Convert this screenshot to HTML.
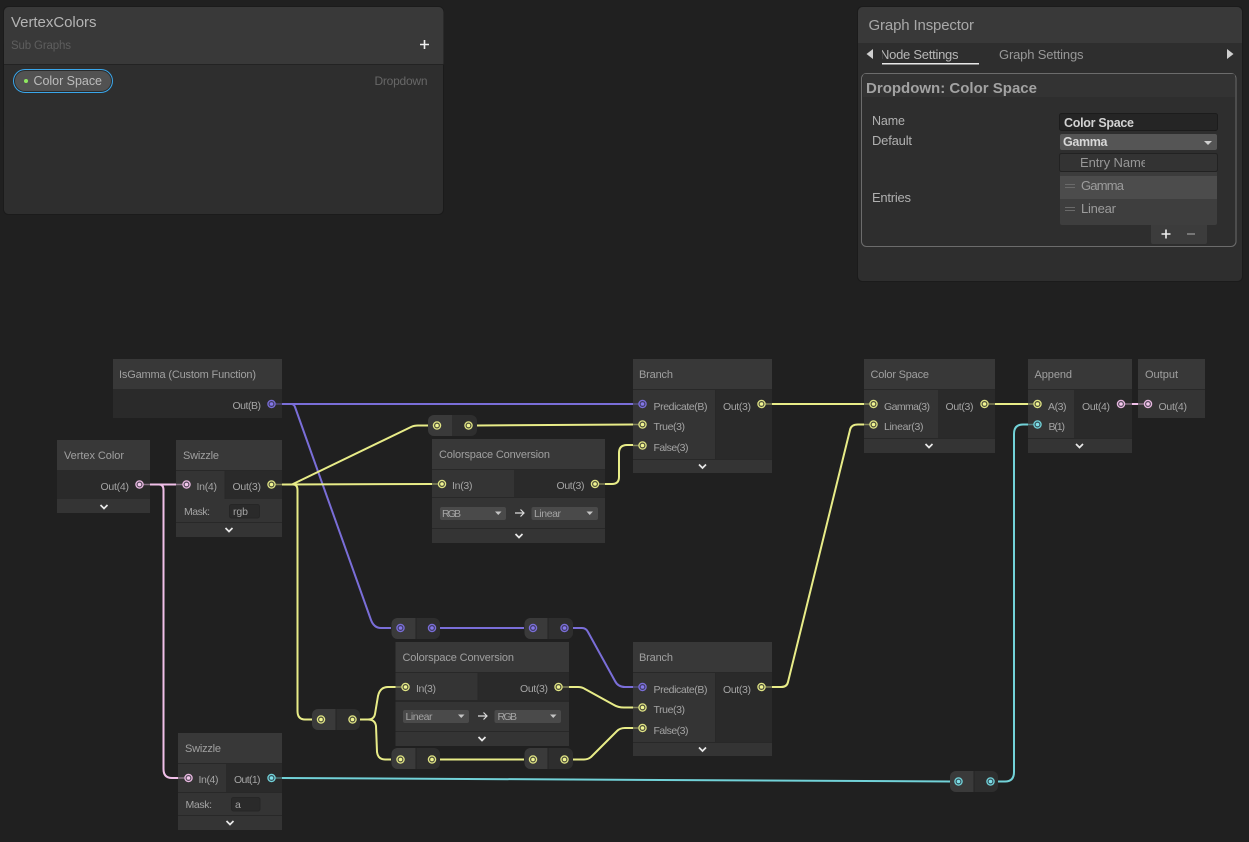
<!DOCTYPE html>
<html lang="en">
<head>
<meta charset="utf-8">
<title>VertexColors Shader Graph</title>
<style>
html,body{margin:0;padding:0;background:#202020;width:1249px;height:842px;overflow:hidden}
svg{display:block;font-family:"Liberation Sans",sans-serif}
.t{font-size:10.5px;fill:#a4a4a4}
.h{font-size:11px;fill:#a0a0a0}
.w{fill:none;stroke-width:2;stroke-linejoin:round}
.y{stroke:#e8ec88}.p{stroke:#7a6ed8}.k{stroke:#f0bfe8}.c{stroke:#72d2d8}
.l{fill:none;stroke-width:1.500;opacity:.45}
.chev{fill:none;stroke:#e8e8e8;stroke-width:1.700}
.py circle:first-child{fill:#4a4b3a;stroke:#dfe384;stroke-width:1.300}
.py circle:last-child{fill:#f0f490}
.pp circle:first-child{fill:#3e3a60;stroke:#7a6ed8;stroke-width:1.300}
.pp circle:last-child{fill:#8478e8}
.pk circle:first-child{fill:#54485a;stroke:#e8b8e0;stroke-width:1.300}
.pk circle:last-child{fill:#f4c8ec}
.pc circle:first-child{fill:#34505a;stroke:#72d2d8;stroke-width:1.300}
.pc circle:last-child{fill:#80e0e8}
.dd{fill:#4a4a4a}
.tri{fill:#c4c4c4}
</style>
</head>
<body>
<svg width="1249" height="842" viewBox="0 0 1249 842" xmlns="http://www.w3.org/2000/svg">
<rect width="1249" height="842" fill="#202020"/>

<!-- Blackboard -->
<rect x="3.500" y="6.500" width="440" height="208" rx="5" fill="#2e2e2e" stroke="#1b1b1b"/>
<path d="M4 64V12a5 5 0 0 1 5-5H438.500a5 5 0 0 1 5 5V64Z" fill="#393939"/>
<rect x="4" y="64" width="439.500" height="1" fill="#232323"/>
<text x="11" y="27" font-size="15" fill="#b4b4b4" textLength="85.500">VertexColors</text>
<text x="11" y="49" font-size="11.500" fill="#5e5e5e" textLength="60">Sub Graphs</text>
<path d="M424.500 40v9M420 44.500h9" stroke="#eee" stroke-width="1.600" fill="none"/>
<rect x="13.500" y="69.500" width="99" height="23" rx="11.500" fill="#2a2a2a" stroke="#3aa6ea" stroke-width="1"/>
<rect x="15" y="71" width="96" height="20" rx="10" fill="#525252"/>
<circle cx="26" cy="81" r="2" fill="#8ee860"/>
<text x="33.500" y="85" font-size="12.500" fill="#bcbcbc" textLength="68.500">Color Space</text>
<text x="374.500" y="85" font-size="12" fill="#676767" textLength="53">Dropdown</text>

<!-- Graph Inspector -->
<rect x="857.500" y="6.500" width="385" height="275" rx="5" fill="#2e2e2e" stroke="#1b1b1b"/>
<path d="M858 43V12a5 5 0 0 1 5-5H1237a5 5 0 0 1 5 5V43Z" fill="#393939"/>
<text x="868.500" y="30" font-size="15" fill="#a8a8a8" textLength="105.500">Graph Inspector</text>
<path d="M873 49v10l-6.500-5Z" fill="#cfcfcf"/>
<path d="M1227 49v10l6.500-5Z" fill="#cfcfcf"/>
<svg x="882" y="44" width="100" height="20" overflow="hidden"><text x="-2" y="15" font-size="13" fill="#b8b8b8" textLength="78.500">Node Settings</text></svg>
<rect x="882" y="63" width="97" height="1.500" fill="#e8e8e8"/>
<text x="999" y="59" font-size="13" fill="#989898" textLength="84.500">Graph Settings</text>
<rect x="861.500" y="73.500" width="374.500" height="173" rx="5" fill="#2e2e2e" stroke="#6c6c6c"/>
<path d="M863 97V76a2 2 0 0 1 2-2H1233a2 2 0 0 1 2 2V97Z" fill="#333"/>
<text x="866" y="93" font-size="15" font-weight="bold" fill="#a2a2a2" textLength="171">Dropdown: Color Space</text>
<text x="872" y="125" font-size="12.500" fill="#b0b0b0" textLength="33">Name</text>
<text x="872" y="145" font-size="13" fill="#b0b0b0" textLength="40">Default</text>
<text x="872" y="202" font-size="13" fill="#b0b0b0" textLength="39">Entries</text>
<rect x="1059.500" y="113.500" width="158" height="17" rx="2" fill="#252525" stroke="#1c1c1c"/>
<text x="1064" y="127" font-size="12.500" font-weight="bold" fill="#d2d2d2" textLength="70">Color Space</text>
<rect x="1060" y="134" width="157" height="16" rx="2" fill="#555"/>
<text x="1063" y="146" font-size="12.500" font-weight="bold" fill="#d8d8d8" textLength="44.500">Gamma</text>
<path d="M1204 141h8l-4 4Z" fill="#d0d0d0"/>
<rect x="1059.500" y="153.500" width="158" height="18" rx="2" fill="#333" stroke="#222"/>
<svg x="1078" y="154" width="67" height="17" overflow="hidden"><text x="2" y="13" font-size="13" fill="#979797" textLength="68">Entry Name</text></svg>
<rect x="1060" y="172" width="157" height="4" fill="#3c3c3c"/>
<rect x="1060" y="176" width="157" height="23" fill="#4c4c4c"/>
<path d="M1060 199h157v24a2 2 0 0 1-2 2H1062a2 2 0 0 1-2-2Z" fill="#3e3e3e"/>
<path d="M1065 184.500h10M1065 187.500h10M1065 207.500h10M1065 210.500h10" stroke="#6a6a6a" stroke-width="1" fill="none"/>
<text x="1081" y="190" font-size="13" fill="#9c9c9c" textLength="43">Gamma</text>
<text x="1081" y="213" font-size="13" fill="#9c9c9c" textLength="35">Linear</text>
<path d="M1151 225h56v17a2 2 0 0 1-2 2H1153a2 2 0 0 1-2-2Z" fill="#3c3c3c"/>
<path d="M1166 229.500v9M1161.500 234h9" stroke="#eee" stroke-width="1.600" fill="none"/>
<path d="M1187 234h8" stroke="#8a8a8a" stroke-width="1.500" fill="none"/>

<!-- Wires -->
<g>
<path class="w p" d="M282 404H633"/>
<path class="w p" d="M291 404Q294 404 295 407L371 620Q374 628 381 628H391"/>
<path class="w p" d="M440 628H524"/>
<path class="w p" d="M573 628H582Q586 628 588 632L615 681Q618 687 625 687H633"/>
<path class="w y" d="M282 484.500H292L411 427Q414 425.500 418 425.500H428"/>
<path class="w y" d="M282 484.500L432 484"/>
<path class="w y" d="M291 484.500H293Q297.500 484.500 297.500 490V711Q297.500 719.500 305 719.500H312"/>
<path class="w y" d="M477 425.500L633 424.500"/>
<path class="w y" d="M605 484H612Q619 484 619 477V453Q619 445 627 445H633"/>
<path class="w y" d="M772 404H864"/>
<path class="w y" d="M995 404H1028"/>
<path class="w y" d="M772 687H781Q787 687 788 682L850 430Q851 424.500 858 424.500H864"/>
<path class="w y" d="M360 719.500H368Q374 719.500 375 714L378 696Q380 687 388 687H396"/>
<path class="w y" d="M368 719.500Q375 719.500 376 726L377 752Q378 759.500 385 759.500H391"/>
<path class="w y" d="M440 759.500H524"/>
<path class="w y" d="M573 759.500H584Q588 759.500 591 757L617 731Q620 728 625 728H633"/>
<path class="w y" d="M569 687H578Q582 687 585 689L614 705Q618 707.500 624 707.500H633"/>
<path class="w k" d="M150 484.500H176"/>
<path class="w k" d="M157 484.500H159Q163.500 484.500 163.500 490V769Q163.500 778 172 778H178"/>
<path class="w c" d="M282 778L950 781.500"/>
<path class="w c" d="M998 781.500H1005Q1014 781.500 1014 772V434Q1014 424.500 1023 424.500H1028"/>
<path class="w k" d="M1132 404H1138"/>
</g>

<!-- IsGamma -->
<rect x="113" y="359" width="169" height="59" fill="#2a2a2a"/>
<rect x="113" y="359" width="169" height="30" fill="#383838"/>
<text class="h" x="119" y="378" textLength="137">IsGamma (Custom Function)</text>
<text class="t" x="232.500" y="409" textLength="28.500">Out(B)</text>

<!-- Vertex Color -->
<rect x="57" y="440" width="93" height="73" fill="#2a2a2a"/>
<rect x="57" y="440" width="93" height="30" fill="#383838"/>
<rect x="57" y="499" width="93" height="14" fill="#343434"/>
<text class="h" x="64" y="459" textLength="60">Vertex Color</text>
<text class="t" x="100.500" y="490" textLength="28.500">Out(4)</text>
<path class="chev" d="M100.500 505l3.500 3.500 3.500-3.500"/>

<!-- Swizzle 1 -->
<rect x="176" y="440" width="106" height="97" fill="#282828"/>
<rect x="176" y="440" width="106" height="30" fill="#383838"/>
<rect x="176" y="471" width="48.500" height="28" fill="#343434"/>
<rect x="225.500" y="471" width="56.500" height="28" fill="#2a2a2a"/>
<rect x="176" y="499" width="106" height="23" fill="#343434"/>
<rect x="176" y="523" width="106" height="14" fill="#343434"/>
<text class="h" x="183" y="459" textLength="36">Swizzle</text>
<text class="t" x="196.500" y="490" textLength="20.500">In(4)</text>
<text class="t" x="232.500" y="490" textLength="28.500">Out(3)</text>
<text class="t" x="184" y="515" textLength="26">Mask:</text>
<rect x="229.500" y="504.500" width="30" height="13.500" rx="2" fill="#2a2a2a" stroke="#262626"/>
<text class="t" x="233" y="515" textLength="15">rgb</text>
<path class="chev" d="M225.500 528l3.500 3.500 3.500-3.500"/>

<!-- Colorspace Conversion 1 -->
<rect x="432" y="439" width="173" height="104" fill="#282828"/>
<rect x="432" y="439" width="173" height="30" fill="#383838"/>
<rect x="432" y="470" width="82" height="27" fill="#343434"/>
<rect x="514" y="470" width="91" height="27" fill="#2a2a2a"/>
<rect x="432" y="498" width="173" height="30" fill="#343434"/>
<rect x="432" y="529" width="173" height="14" fill="#343434"/>
<text class="h" x="439" y="458" textLength="111">Colorspace Conversion</text>
<text class="t" x="452" y="489" textLength="20.500">In(3)</text>
<text class="t" x="556.500" y="489" textLength="28">Out(3)</text>
<rect class="dd" x="440" y="507" width="66" height="13" rx="2"/>
<text class="t" x="442" y="517" textLength="19">RGB</text>
<path class="tri" d="M495 511.500h6.500l-3.250 3.500Z"/>
<path d="M515 513h9M520.500 509.500l3.500 3.500-3.500 3.500" fill="none" stroke="#dcdcdc" stroke-width="1.200"/>
<rect class="dd" x="531.500" y="507" width="66.500" height="13" rx="2"/>
<text class="t" x="534" y="517" textLength="27">Linear</text>
<path class="tri" d="M586.500 511.500h6.500l-3.250 3.500Z"/>
<path class="chev" d="M515.500 534l3.500 3.500 3.500-3.500"/>

<!-- Branch 1 -->
<rect x="633" y="359" width="139" height="114" fill="#282828"/>
<rect x="633" y="359" width="139" height="30" fill="#383838"/>
<rect x="633" y="390" width="82" height="69" fill="#343434"/>
<rect x="716" y="390" width="56" height="69" fill="#2a2a2a"/>
<rect x="633" y="460" width="139" height="13" fill="#343434"/>
<text class="h" x="639" y="378" textLength="34">Branch</text>
<text class="t" x="653.500" y="410" textLength="54">Predicate(B)</text>
<text class="t" x="653.500" y="430" textLength="31.500">True(3)</text>
<text class="t" x="653.500" y="451" textLength="35">False(3)</text>
<text class="t" x="723" y="410" textLength="28">Out(3)</text>
<path class="chev" d="M699 464.500l3.500 3.500 3.500-3.500"/>

<!-- Color Space -->
<rect x="864" y="359" width="131" height="94" fill="#282828"/>
<rect x="864" y="359" width="131" height="30" fill="#383838"/>
<rect x="864" y="390" width="74" height="48" fill="#343434"/>
<rect x="938" y="390" width="57" height="48" fill="#2a2a2a"/>
<rect x="864" y="439" width="131" height="14" fill="#343434"/>
<text class="h" x="870.500" y="378" textLength="58.500">Color Space</text>
<text class="t" x="884" y="410" textLength="46">Gamma(3)</text>
<text class="t" x="884" y="430" textLength="39.500">Linear(3)</text>
<text class="t" x="945.500" y="410" textLength="28">Out(3)</text>
<path class="chev" d="M925.500 444l3.500 3.500 3.500-3.500"/>

<!-- Append -->
<rect x="1028" y="359" width="104" height="94" fill="#282828"/>
<rect x="1028" y="359" width="104" height="30" fill="#383838"/>
<rect x="1028" y="390" width="46" height="48" fill="#343434"/>
<rect x="1074" y="390" width="58" height="48" fill="#2a2a2a"/>
<rect x="1028" y="439" width="104" height="14" fill="#343434"/>
<text class="h" x="1034.500" y="378" textLength="37.500">Append</text>
<text class="t" x="1048" y="410" textLength="18.500">A(3)</text>
<text class="t" x="1048.500" y="430" textLength="16.500">B(1)</text>
<text class="t" x="1082" y="410" textLength="28">Out(4)</text>
<path class="chev" d="M1076 444l3.500 3.500 3.500-3.500"/>

<!-- Output -->
<rect x="1138" y="359" width="67" height="59" fill="#343434"/>
<rect x="1138" y="359" width="67" height="30" fill="#383838"/>
<rect x="1138" y="389" width="67" height="1" fill="#282828"/>
<text class="h" x="1145" y="378" textLength="33">Output</text>
<text class="t" x="1158.500" y="410" textLength="28.500">Out(4)</text>

<!-- Colorspace Conversion 2 -->
<rect x="395.500" y="642" width="173.500" height="104" fill="#282828"/>
<rect x="395.500" y="642" width="173.500" height="30" fill="#383838"/>
<rect x="395.500" y="673" width="82" height="27" fill="#343434"/>
<rect x="478.500" y="673" width="90.500" height="27" fill="#2a2a2a"/>
<rect x="395.500" y="702" width="173.500" height="29" fill="#343434"/>
<rect x="395.500" y="732" width="173.500" height="14" fill="#343434"/>
<text class="h" x="402.500" y="661" textLength="111.500">Colorspace Conversion</text>
<text class="t" x="416" y="692" textLength="20">In(3)</text>
<text class="t" x="520" y="692" textLength="28">Out(3)</text>
<rect class="dd" x="403" y="710" width="66" height="13" rx="2"/>
<text class="t" x="405.500" y="720" textLength="27">Linear</text>
<path class="tri" d="M458 714.500h6.500l-3.250 3.500Z"/>
<path d="M478 716h9M483.500 712.500l3.500 3.500-3.500 3.500" fill="none" stroke="#dcdcdc" stroke-width="1.200"/>
<rect class="dd" x="494.500" y="710" width="66.500" height="13" rx="2"/>
<text class="t" x="497.500" y="720" textLength="19.500">RGB</text>
<path class="tri" d="M550 714.500h6.500l-3.250 3.500Z"/>
<path class="chev" d="M478.500 737l3.500 3.500 3.500-3.500"/>

<!-- Branch 2 -->
<rect x="633" y="642" width="139" height="114" fill="#282828"/>
<rect x="633" y="642" width="139" height="30" fill="#383838"/>
<rect x="633" y="673" width="82" height="69" fill="#343434"/>
<rect x="716" y="673" width="56" height="69" fill="#2a2a2a"/>
<rect x="633" y="743" width="139" height="13" fill="#343434"/>
<text class="h" x="639" y="661" textLength="34">Branch</text>
<text class="t" x="653.500" y="693" textLength="54">Predicate(B)</text>
<text class="t" x="653.500" y="713" textLength="31.500">True(3)</text>
<text class="t" x="653.500" y="734" textLength="35">False(3)</text>
<text class="t" x="723" y="693" textLength="28">Out(3)</text>
<path class="chev" d="M699 747.500l3.500 3.500 3.500-3.500"/>

<!-- Swizzle 2 -->
<rect x="178" y="733" width="104" height="97" fill="#282828"/>
<rect x="178" y="733" width="104" height="30" fill="#383838"/>
<rect x="178" y="764" width="48" height="28" fill="#343434"/>
<rect x="226" y="764" width="56" height="28" fill="#2a2a2a"/>
<rect x="178" y="793" width="104" height="22" fill="#343434"/>
<rect x="178" y="816" width="104" height="14" fill="#343434"/>
<text class="h" x="185" y="752" textLength="36">Swizzle</text>
<text class="t" x="198.500" y="783" textLength="20">In(4)</text>
<text class="t" x="234" y="783" textLength="26.500">Out(1)</text>
<text class="t" x="185.500" y="808" textLength="26.500">Mask:</text>
<rect x="231.500" y="797.500" width="28.500" height="13.500" rx="2" fill="#2a2a2a" stroke="#262626"/>
<text class="t" x="235" y="808">a</text>
<path class="chev" d="M226.500 821l3.500 3.500 3.500-3.500"/>

<!-- Redirect nodes -->
<g fill="#3a3a3a">
<path d="M452 415H434a6 6 0 0 0-6 6v9a6 6 0 0 0 6 6H452Z"/>
<path d="M416 618H397.500a6 6 0 0 0-6 6v9a6 6 0 0 0 6 6H416Z"/>
<path d="M548 618H530.500a6 6 0 0 0-6 6v9a6 6 0 0 0 6 6H548Z"/>
<path d="M336 709H318a6 6 0 0 0-6 6v9a6 6 0 0 0 6 6H336Z"/>
<path d="M416 748H397.500a6 6 0 0 0-6 6v9a6 6 0 0 0 6 6H416Z"/>
<path d="M548 748H530.500a6 6 0 0 0-6 6v9a6 6 0 0 0 6 6H548Z"/>
<path d="M974 771H956a6 6 0 0 0-6 6v9a6 6 0 0 0 6 6H974Z"/>
</g>
<g fill="#2e2e2e">
<path d="M452 415H471a6 6 0 0 1 6 6v9a6 6 0 0 1-6 6H452Z"/>
<path d="M416 618H434a6 6 0 0 1 6 6v9a6 6 0 0 1-6 6H416Z"/>
<path d="M548 618H567a6 6 0 0 1 6 6v9a6 6 0 0 1-6 6H548Z"/>
<path d="M336 709H354a6 6 0 0 1 6 6v9a6 6 0 0 1-6 6H336Z"/>
<path d="M416 748H434a6 6 0 0 1 6 6v9a6 6 0 0 1-6 6H416Z"/>
<path d="M548 748H567a6 6 0 0 1 6 6v9a6 6 0 0 1-6 6H548Z"/>
<path d="M974 771H992a6 6 0 0 1 6 6v9a6 6 0 0 1-6 6H974Z"/>
</g>
<path d="M416 618v21M548 618v21M336 709v21M416 748v21M548 748v21M974 771v21" stroke="#242424" stroke-width="1" fill="none"/>

<!-- Port leads -->
<g class="l">
<path class="p" d="M275 404H282M633 404H639M633 687H639"/>
<path class="y" d="M275 484.500H282M432 484H438M599 484H605M633 424.500H639M633 445.500H639M765 404H772M864 404H870M988 404H995M1028 404H1034M864 424.500H870M395.500 687H402M562 687H569M633 707.500H639M633 728H639M765 687H772"/>
<path class="k" d="M143 484.500H150M176 484.500H183M178 778H185M1125 404H1132M1138 404H1145"/>
<path class="c" d="M275 778H282M1028 424.500H1034"/>
</g>

<!-- Ports -->
<g class="pp"><circle cx="271.500" cy="404" r="3.600"/><circle cx="271.500" cy="404" r="1.800"/></g>
<g class="pp"><circle cx="642.500" cy="404" r="3.600"/><circle cx="642.500" cy="404" r="1.800"/></g>
<g class="pp"><circle cx="642.500" cy="687" r="3.600"/><circle cx="642.500" cy="687" r="1.800"/></g>
<g class="pp"><circle cx="400.500" cy="628" r="3.600"/><circle cx="400.500" cy="628" r="1.800"/></g>
<g class="pp"><circle cx="432" cy="628" r="3.600"/><circle cx="432" cy="628" r="1.800"/></g>
<g class="pp"><circle cx="533" cy="628" r="3.600"/><circle cx="533" cy="628" r="1.800"/></g>
<g class="pp"><circle cx="564.500" cy="628" r="3.600"/><circle cx="564.500" cy="628" r="1.800"/></g>

<g class="pk"><circle cx="139.500" cy="484.500" r="3.600"/><circle cx="139.500" cy="484.500" r="1.800"/></g>
<g class="pk"><circle cx="186.500" cy="484.500" r="3.600"/><circle cx="186.500" cy="484.500" r="1.800"/></g>
<g class="pk"><circle cx="188.500" cy="778" r="3.600"/><circle cx="188.500" cy="778" r="1.800"/></g>
<g class="pk"><circle cx="1121" cy="404" r="3.600"/><circle cx="1121" cy="404" r="1.800"/></g>
<g class="pk"><circle cx="1148" cy="404" r="3.600"/><circle cx="1148" cy="404" r="1.800"/></g>

<g class="pc"><circle cx="271.500" cy="778" r="3.600"/><circle cx="271.500" cy="778" r="1.800"/></g>
<g class="pc"><circle cx="1037.500" cy="424.500" r="3.600"/><circle cx="1037.500" cy="424.500" r="1.800"/></g>
<g class="pc"><circle cx="958.500" cy="781.500" r="3.600"/><circle cx="958.500" cy="781.500" r="1.800"/></g>
<g class="pc"><circle cx="990.500" cy="781.500" r="3.600"/><circle cx="990.500" cy="781.500" r="1.800"/></g>

<g class="py"><circle cx="271.500" cy="484.500" r="3.600"/><circle cx="271.500" cy="484.500" r="1.800"/></g>
<g class="py"><circle cx="437" cy="425.500" r="3.600"/><circle cx="437" cy="425.500" r="1.800"/></g>
<g class="py"><circle cx="468.500" cy="425.500" r="3.600"/><circle cx="468.500" cy="425.500" r="1.800"/></g>
<g class="py"><circle cx="442" cy="484" r="3.600"/><circle cx="442" cy="484" r="1.800"/></g>
<g class="py"><circle cx="595" cy="484" r="3.600"/><circle cx="595" cy="484" r="1.800"/></g>
<g class="py"><circle cx="642.500" cy="424.500" r="3.600"/><circle cx="642.500" cy="424.500" r="1.800"/></g>
<g class="py"><circle cx="642.500" cy="445.500" r="3.600"/><circle cx="642.500" cy="445.500" r="1.800"/></g>
<g class="py"><circle cx="761.500" cy="404" r="3.600"/><circle cx="761.500" cy="404" r="1.800"/></g>
<g class="py"><circle cx="873.500" cy="404" r="3.600"/><circle cx="873.500" cy="404" r="1.800"/></g>
<g class="py"><circle cx="873.500" cy="424.500" r="3.600"/><circle cx="873.500" cy="424.500" r="1.800"/></g>
<g class="py"><circle cx="984.500" cy="404" r="3.600"/><circle cx="984.500" cy="404" r="1.800"/></g>
<g class="py"><circle cx="1037.500" cy="404" r="3.600"/><circle cx="1037.500" cy="404" r="1.800"/></g>
<g class="py"><circle cx="321" cy="719.500" r="3.600"/><circle cx="321" cy="719.500" r="1.800"/></g>
<g class="py"><circle cx="352.500" cy="719.500" r="3.600"/><circle cx="352.500" cy="719.500" r="1.800"/></g>
<g class="py"><circle cx="400.500" cy="759.500" r="3.600"/><circle cx="400.500" cy="759.500" r="1.800"/></g>
<g class="py"><circle cx="432" cy="759.500" r="3.600"/><circle cx="432" cy="759.500" r="1.800"/></g>
<g class="py"><circle cx="533" cy="759.500" r="3.600"/><circle cx="533" cy="759.500" r="1.800"/></g>
<g class="py"><circle cx="564.500" cy="759.500" r="3.600"/><circle cx="564.500" cy="759.500" r="1.800"/></g>
<g class="py"><circle cx="405.500" cy="687" r="3.600"/><circle cx="405.500" cy="687" r="1.800"/></g>
<g class="py"><circle cx="558.500" cy="687" r="3.600"/><circle cx="558.500" cy="687" r="1.800"/></g>
<g class="py"><circle cx="642.500" cy="707.500" r="3.600"/><circle cx="642.500" cy="707.500" r="1.800"/></g>
<g class="py"><circle cx="642.500" cy="728" r="3.600"/><circle cx="642.500" cy="728" r="1.800"/></g>
<g class="py"><circle cx="761.500" cy="687" r="3.600"/><circle cx="761.500" cy="687" r="1.800"/></g>
</svg>
</body>
</html>
